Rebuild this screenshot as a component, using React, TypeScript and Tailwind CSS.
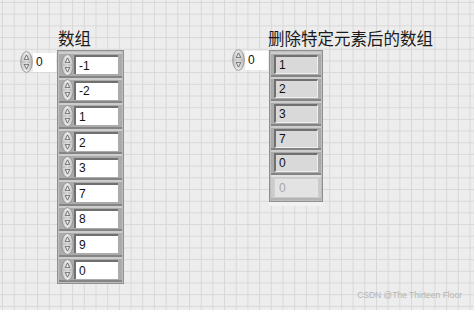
import React from 'react';

function Spinner() {
  return (
    <svg width="13" height="22" viewBox="0 0 13 22" className="shrink-0">
      <defs>
        <linearGradient id="spg" x1="0" x2="1" y1="0" y2="0">
          <stop offset="0" stopColor="#c4c4c4" />
          <stop offset="0.5" stopColor="#eeeeee" />
          <stop offset="1" stopColor="#b8b8b8" />
        </linearGradient>
      </defs>
      <ellipse cx="6.5" cy="11" rx="5.8" ry="10.4" fill="url(#spg)" stroke="#8c8c8c" strokeWidth="0.8" />
      <line x1="1.5" y1="11" x2="11.5" y2="11" stroke="#9a9a9a" strokeWidth="0.6" />
      <path d="M6.5 3.8 L4.2 8.6 L8.8 8.6 Z" fill="none" stroke="#555" strokeWidth="0.8" />
      <path d="M4.2 13.4 L8.8 13.4 L6.5 18.2 Z" fill="none" stroke="#555" strokeWidth="0.8" />
    </svg>
  );
}

function IndexControl() {
  return (
    <div className="flex items-center h-[20px]">
      <Spinner />
      <div className="w-[23px] h-[19px] bg-white flex items-center pl-[3px] text-[12px] text-[#111]">0</div>
    </div>
  );
}

function ControlRow({ value }: { value: string }) {
  return (
    <div className="flex items-center h-[25.6px] pl-[2px] pr-[4px] bg-[#ababab] border-t-[2px] border-t-[#cdcdcd] border-b-[2px] border-b-[#858585]">
      <Spinner />
      <div className="w-[47px] h-[19px] bg-white border-l-[2px] border-t-[2px] border-l-[#707070] border-t-[#707070] flex items-center pl-[3px] text-[12px] text-[#111]">
        {value}
      </div>
    </div>
  );
}

function IndicatorRow({ value, dim }: { value: string; dim?: boolean }) {
  return (
    <div className={dim
      ? "flex items-center h-[24.6px] px-[3px] bg-[#cbcbcb] border-t-[2px] border-t-[#e2e2e2] border-b-[2px] border-b-[#b4b4b4]"
      : "flex items-center h-[24.6px] px-[3px] bg-[#ababab] border-t-[2px] border-t-[#cdcdcd] border-b-[2px] border-b-[#858585]"}>
      <div className={dim
        ? "w-[46px] h-[19px] bg-[#e3e3e3] border-l-[1px] border-t-[1px] border-l-[#d0d0d0] border-t-[#d0d0d0] flex items-center pl-[4px] text-[12px] text-[#a8a8a8]"
        : "w-[46px] h-[19px] bg-[#d9d9d9] border-l-[2px] border-t-[2px] border-l-[#707070] border-t-[#707070] border-r border-b border-r-[#efefef] border-b-[#efefef] flex items-center pl-[3px] text-[12px] text-[#111]"}>
        {value}
      </div>
    </div>
  );
}

export default function App() {
  const input = ['-1', '-2', '1', '2', '3', '7', '8', '9', '0'];
  const output = ['1', '2', '3', '7', '0'];

  return (
    <div
      className="relative w-[474px] h-[310px] overflow-hidden bg-[#ededed] bg-[image:linear-gradient(to_right,#d8d8d8_1px,transparent_1px),linear-gradient(to_bottom,#d8d8d8_1px,transparent_1px)] bg-[size:11.7px_11.7px] bg-[position:2px_2px] font-['Liberation_Sans','Noto_Sans_CJK_SC',sans-serif]"
    >
      {/* 数组 */}
      <div className="absolute left-[20px] top-[26px] flex flex-col">
        <div className="ml-[38px] h-[24px] text-[16.5px] leading-[24px] text-[#1a1a1a] font-['Noto_Sans_CJK_SC',sans-serif]">数组</div>
        <div className="flex items-start">
          <div className="mt-[2px] mr-[1px]"><IndexControl /></div>
          <div className="w-[67px] bg-[#bdbdbd] border-[1px] border-[#909090] p-[1px]">
            {input.map((v, i) => <ControlRow key={i} value={v} />)}
          </div>
        </div>
      </div>

      {/* 删除特定元素后的数组 */}
      <div className="absolute left-[232px] top-[26px] flex flex-col">
        <div className="ml-[36px] h-[24px] text-[16.5px] leading-[24px] text-[#1a1a1a] font-['Noto_Sans_CJK_SC',sans-serif] whitespace-nowrap">删除特定元素后的数组</div>
        <div className="flex items-start">
          <div className="mr-[1px]"><IndexControl /></div>
          <div className="flex flex-col">
            <div className="w-[54px] bg-[#bdbdbd] border-[1px] border-[#909090] p-[1px]">
              {output.map((v, i) => <IndicatorRow key={i} value={v} />)}
              <IndicatorRow value="0" dim />
            </div>
            <div className="w-[54px] h-[4px] bg-[#f2f2f2]" />
          </div>
        </div>
      </div>

      <div className="absolute right-[12px] bottom-[8px] text-[8.5px] text-[#b4b4b4]">CSDN @The Thirteen Floor</div>
    </div>
  );
}
